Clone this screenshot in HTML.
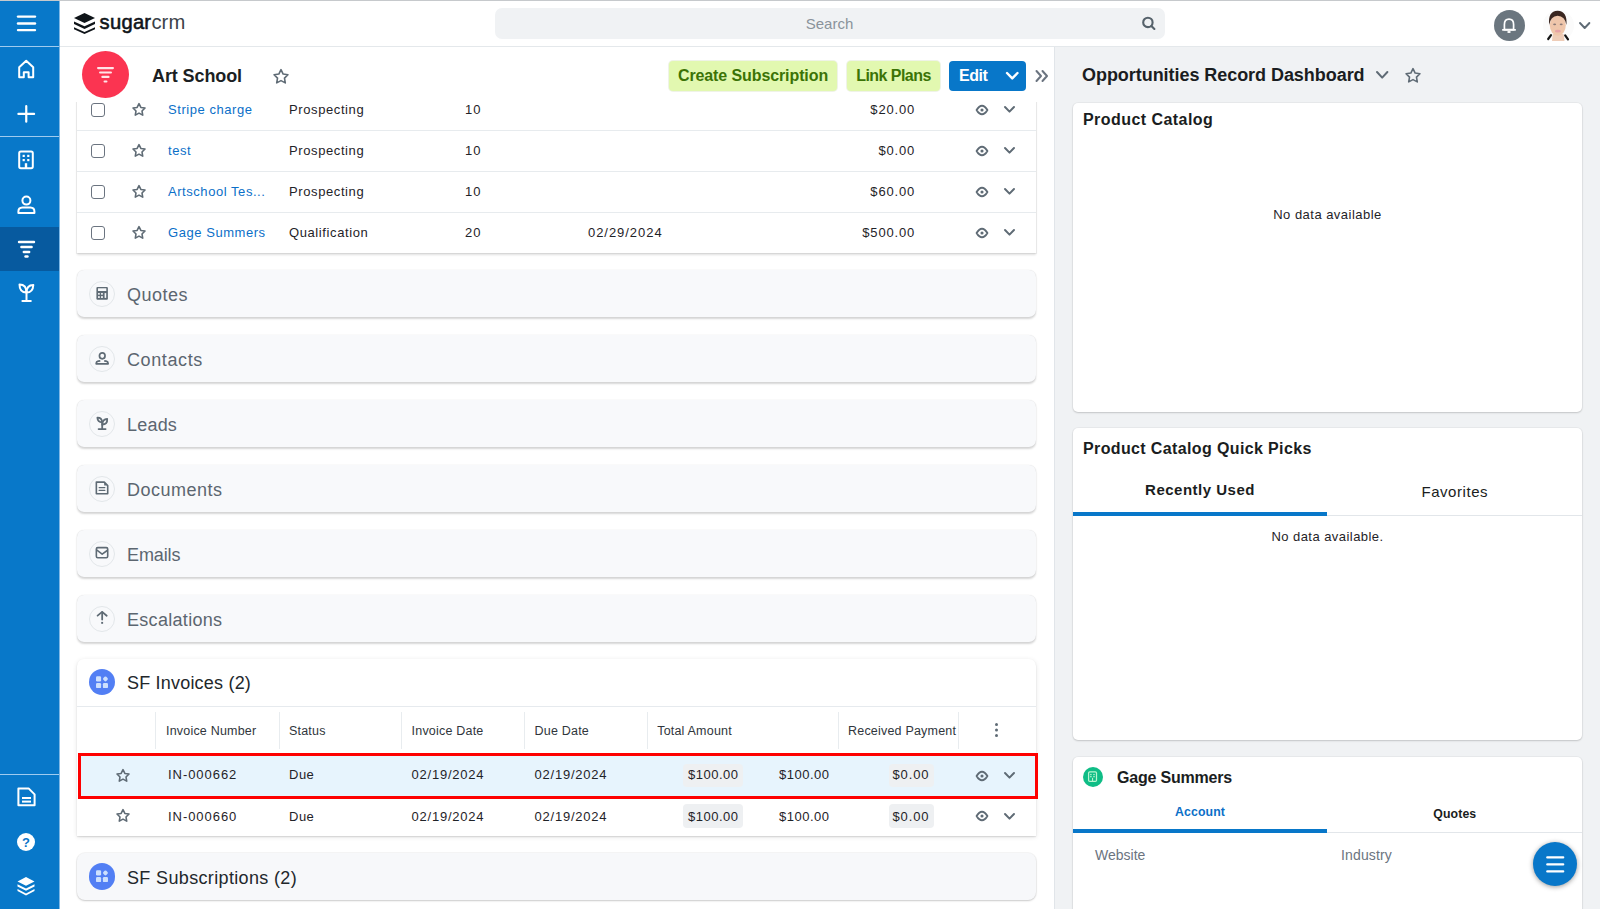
<!DOCTYPE html>
<html><head><meta charset="utf-8"><style>
html,body{margin:0;padding:0;}
body{width:1600px;height:909px;overflow:hidden;position:relative;background:#fff;font-family:"Liberation Sans", sans-serif;}
.t{position:absolute;white-space:nowrap;line-height:1;}
svg{overflow:visible;}
</style></head><body>
<div style="position:absolute;left:1054px;top:47px;width:546px;height:862px;background:#f0f2f4;"></div>
<div style="position:absolute;left:1054px;top:47px;width:1px;height:862px;background:#e1e5e9;"></div>
<div style="position:absolute;left:77px;top:60px;width:959px;height:193px;background:#fff;box-shadow:0 1.5px 2px rgba(0,0,0,0.12), 0 0 0 1px rgba(0,0,0,0.05);"></div>
<div style="position:absolute;left:77px;top:130px;width:959px;height:1px;background:#e7ebee;"></div>
<div style="position:absolute;left:77px;top:171px;width:959px;height:1px;background:#e7ebee;"></div>
<div style="position:absolute;left:77px;top:212px;width:959px;height:1px;background:#e7ebee;"></div>
<div style="position:absolute;left:91px;top:102.5px;width:14px;height:14.0px;box-sizing:border-box;border:1.5px solid #6b7480;border-radius:3px;background:#fff;"></div>
<svg style="position:absolute;left:128.8px;top:100.1px" width="20" height="20" viewBox="0 0 20 20"><polygon points="10.00,3.70 11.85,7.45 15.99,8.05 13.00,10.97 13.70,15.10 10.00,13.15 6.30,15.10 7.00,10.97 4.01,8.05 8.15,7.45" fill="none" stroke="#5f6b75" stroke-width="1.6" stroke-linejoin="round"/></svg>
<div class="t" style="left:168.00px;top:102.60px;font-size:13px;font-weight:400;color:#0b6fc8;letter-spacing:0.55px;">Stripe charge</div>
<div class="t" style="left:289.00px;top:102.60px;font-size:13px;font-weight:400;color:#1f2328;letter-spacing:0.6px;">Prospecting</div>
<div class="t" style="left:465.00px;top:102.60px;font-size:13px;font-weight:400;color:#1f2328;letter-spacing:0.9px;">10</div>
<div class="t" style="right:684.80px;top:102.60px;font-size:13px;font-weight:400;color:#1f2328;letter-spacing:0.85px;">$20.00</div>
<svg style="position:absolute;left:973.5px;top:103.5px" width="16" height="12" viewBox="0 0 16 12"><path d="M2.6 6 C4.4 2.9 6 1.7 8 1.7 C10 1.7 11.6 2.9 13.4 6 C11.6 9.1 10 10.3 8 10.3 C6 10.3 4.4 9.1 2.6 6 Z" fill="none" stroke="#5f6b75" stroke-width="1.9" stroke-linejoin="round"/><circle cx="8" cy="6" r="1.55" fill="#5f6b75"/></svg>
<svg style="position:absolute;left:1002.0px;top:104.2px" width="15" height="10.6" viewBox="0 0 15 10.6"><polyline points="3,3 7.5,7.6 12,3" fill="none" stroke="#5f6b75" stroke-width="2" stroke-linecap="round" stroke-linejoin="round"/></svg>
<div style="position:absolute;left:91px;top:143.5px;width:14px;height:14.0px;box-sizing:border-box;border:1.5px solid #6b7480;border-radius:3px;background:#fff;"></div>
<svg style="position:absolute;left:128.8px;top:141.1px" width="20" height="20" viewBox="0 0 20 20"><polygon points="10.00,3.70 11.85,7.45 15.99,8.05 13.00,10.97 13.70,15.10 10.00,13.15 6.30,15.10 7.00,10.97 4.01,8.05 8.15,7.45" fill="none" stroke="#5f6b75" stroke-width="1.6" stroke-linejoin="round"/></svg>
<div class="t" style="left:168.00px;top:143.60px;font-size:13px;font-weight:400;color:#0b6fc8;letter-spacing:0.55px;">test</div>
<div class="t" style="left:289.00px;top:143.60px;font-size:13px;font-weight:400;color:#1f2328;letter-spacing:0.6px;">Prospecting</div>
<div class="t" style="left:465.00px;top:143.60px;font-size:13px;font-weight:400;color:#1f2328;letter-spacing:0.9px;">10</div>
<div class="t" style="right:684.80px;top:143.60px;font-size:13px;font-weight:400;color:#1f2328;letter-spacing:0.85px;">$0.00</div>
<svg style="position:absolute;left:973.5px;top:144.5px" width="16" height="12" viewBox="0 0 16 12"><path d="M2.6 6 C4.4 2.9 6 1.7 8 1.7 C10 1.7 11.6 2.9 13.4 6 C11.6 9.1 10 10.3 8 10.3 C6 10.3 4.4 9.1 2.6 6 Z" fill="none" stroke="#5f6b75" stroke-width="1.9" stroke-linejoin="round"/><circle cx="8" cy="6" r="1.55" fill="#5f6b75"/></svg>
<svg style="position:absolute;left:1002.0px;top:145.2px" width="15" height="10.6" viewBox="0 0 15 10.6"><polyline points="3,3 7.5,7.6 12,3" fill="none" stroke="#5f6b75" stroke-width="2" stroke-linecap="round" stroke-linejoin="round"/></svg>
<div style="position:absolute;left:91px;top:184.5px;width:14px;height:14.0px;box-sizing:border-box;border:1.5px solid #6b7480;border-radius:3px;background:#fff;"></div>
<svg style="position:absolute;left:128.8px;top:182.1px" width="20" height="20" viewBox="0 0 20 20"><polygon points="10.00,3.70 11.85,7.45 15.99,8.05 13.00,10.97 13.70,15.10 10.00,13.15 6.30,15.10 7.00,10.97 4.01,8.05 8.15,7.45" fill="none" stroke="#5f6b75" stroke-width="1.6" stroke-linejoin="round"/></svg>
<div class="t" style="left:168.00px;top:184.60px;font-size:13px;font-weight:400;color:#0b6fc8;letter-spacing:0.55px;">Artschool Tes...</div>
<div class="t" style="left:289.00px;top:184.60px;font-size:13px;font-weight:400;color:#1f2328;letter-spacing:0.6px;">Prospecting</div>
<div class="t" style="left:465.00px;top:184.60px;font-size:13px;font-weight:400;color:#1f2328;letter-spacing:0.9px;">10</div>
<div class="t" style="right:684.80px;top:184.60px;font-size:13px;font-weight:400;color:#1f2328;letter-spacing:0.85px;">$60.00</div>
<svg style="position:absolute;left:973.5px;top:185.5px" width="16" height="12" viewBox="0 0 16 12"><path d="M2.6 6 C4.4 2.9 6 1.7 8 1.7 C10 1.7 11.6 2.9 13.4 6 C11.6 9.1 10 10.3 8 10.3 C6 10.3 4.4 9.1 2.6 6 Z" fill="none" stroke="#5f6b75" stroke-width="1.9" stroke-linejoin="round"/><circle cx="8" cy="6" r="1.55" fill="#5f6b75"/></svg>
<svg style="position:absolute;left:1002.0px;top:186.2px" width="15" height="10.6" viewBox="0 0 15 10.6"><polyline points="3,3 7.5,7.6 12,3" fill="none" stroke="#5f6b75" stroke-width="2" stroke-linecap="round" stroke-linejoin="round"/></svg>
<div style="position:absolute;left:91px;top:225.5px;width:14px;height:14.0px;box-sizing:border-box;border:1.5px solid #6b7480;border-radius:3px;background:#fff;"></div>
<svg style="position:absolute;left:128.8px;top:223.1px" width="20" height="20" viewBox="0 0 20 20"><polygon points="10.00,3.70 11.85,7.45 15.99,8.05 13.00,10.97 13.70,15.10 10.00,13.15 6.30,15.10 7.00,10.97 4.01,8.05 8.15,7.45" fill="none" stroke="#5f6b75" stroke-width="1.6" stroke-linejoin="round"/></svg>
<div class="t" style="left:168.00px;top:225.60px;font-size:13px;font-weight:400;color:#0b6fc8;letter-spacing:0.55px;">Gage Summers</div>
<div class="t" style="left:289.00px;top:225.60px;font-size:13px;font-weight:400;color:#1f2328;letter-spacing:0.6px;">Qualification</div>
<div class="t" style="left:465.00px;top:225.60px;font-size:13px;font-weight:400;color:#1f2328;letter-spacing:0.9px;">20</div>
<div class="t" style="left:588.00px;top:225.60px;font-size:13px;font-weight:400;color:#1f2328;letter-spacing:0.95px;">02/29/2024</div>
<div class="t" style="right:684.80px;top:225.60px;font-size:13px;font-weight:400;color:#1f2328;letter-spacing:0.85px;">$500.00</div>
<svg style="position:absolute;left:973.5px;top:226.5px" width="16" height="12" viewBox="0 0 16 12"><path d="M2.6 6 C4.4 2.9 6 1.7 8 1.7 C10 1.7 11.6 2.9 13.4 6 C11.6 9.1 10 10.3 8 10.3 C6 10.3 4.4 9.1 2.6 6 Z" fill="none" stroke="#5f6b75" stroke-width="1.9" stroke-linejoin="round"/><circle cx="8" cy="6" r="1.55" fill="#5f6b75"/></svg>
<svg style="position:absolute;left:1002.0px;top:227.2px" width="15" height="10.6" viewBox="0 0 15 10.6"><polyline points="3,3 7.5,7.6 12,3" fill="none" stroke="#5f6b75" stroke-width="2" stroke-linecap="round" stroke-linejoin="round"/></svg>
<div style="position:absolute;left:60px;top:47px;width:994px;height:55px;background:#fff;"></div>
<div style="position:absolute;left:82px;top:51px;width:47px;height:47px;border-radius:50%;background:#fb3451;"></div>
<svg style="position:absolute;left:93px;top:62px" width="24" height="24" viewBox="0 0 24 24"><g stroke="#ffe4e8" stroke-linecap="round" stroke-width="2.2"><line x1="5.1" y1="6.1" x2="19.9" y2="6.1"/><line x1="7.1" y1="10.5" x2="17.9" y2="10.5"/><line x1="9.4" y1="14.9" x2="15.5" y2="14.9"/><line x1="11.6" y1="19.5" x2="13.4" y2="19.5"/></g></svg>
<div class="t" style="left:152.00px;top:66.76px;font-size:18px;font-weight:700;color:#1b1f23;letter-spacing:-0.1px;">Art School</div>
<svg style="position:absolute;left:271px;top:67.1px" width="20" height="20" viewBox="0 0 20 20"><polygon points="10.00,2.70 12.15,7.05 16.94,7.74 13.47,11.13 14.29,15.91 10.00,13.65 5.71,15.91 6.53,11.13 3.06,7.74 7.85,7.05" fill="none" stroke="#5f6b75" stroke-width="1.6" stroke-linejoin="round"/></svg>
<div style="position:absolute;left:669px;top:61px;width:168px;height:30px;background:#e2f8b0;border-radius:4px;box-shadow:0 0 0 1px rgba(120,160,60,0.12);"></div>
<div class="t" style="left:353.00px;width:800px;text-align:center;top:68.46px;font-size:16px;font-weight:700;color:#3b7306;letter-spacing:-0.1px;">Create Subscription</div>
<div style="position:absolute;left:847px;top:61px;width:93px;height:30px;background:#e2f8b0;border-radius:4px;box-shadow:0 0 0 1px rgba(120,160,60,0.12);"></div>
<div class="t" style="left:493.50px;width:800px;text-align:center;top:68.46px;font-size:16px;font-weight:700;color:#3b7306;letter-spacing:-0.55px;">Link Plans</div>
<div style="position:absolute;left:949px;top:61px;width:77px;height:30px;background:#0877c9;border-radius:4px;"></div>
<div class="t" style="left:959.00px;top:68.46px;font-size:16px;font-weight:700;color:#fff;letter-spacing:-0.5px;">Edit</div>
<svg style="position:absolute;left:1003.95px;top:69.89999999999999px" width="16.5" height="11.4" viewBox="0 0 16.5 11.4"><polyline points="3,3 8.25,8.4 13.5,3" fill="none" stroke="#fff" stroke-width="2.4" stroke-linecap="round" stroke-linejoin="round"/></svg>
<svg style="position:absolute;left:1034px;top:68px" width="16" height="16" viewBox="0 0 16 16"><g fill="none" stroke="#6b7480" stroke-width="2" stroke-linecap="round" stroke-linejoin="round"><polyline points="2.5,3 7,8 2.5,13"/><polyline points="8.5,3 13,8 8.5,13"/></g></svg>
<div style="position:absolute;left:77px;top:270px;width:959px;height:47px;background:#f8f9fb;border-radius:7px;box-shadow:0 1.5px 2px rgba(0,0,0,0.16), 0 0 1px rgba(0,0,0,0.12);"></div>
<div style="position:absolute;left:89px;top:281px;width:26px;height:26px;box-sizing:border-box;border-radius:50%;border:1px solid #e3e7ea;"></div>
<svg style="position:absolute;left:94px;top:286px" width="16" height="16" viewBox="0 0 16 16"><rect x="2.4" y="0.9" width="11.5" height="12.9" rx="1.1" fill="#5f6b75"/><g fill="#f7f8fa"><rect x="4" y="2.3" width="8.3" height="2.7"/><rect x="4" y="7.1" width="1.8" height="1.5"/><rect x="7" y="7.1" width="1.9" height="1.5"/><rect x="4" y="10.2" width="1.8" height="1.7"/><rect x="7" y="10.2" width="1.9" height="1.7"/><rect x="10.6" y="7.1" width="1.6" height="4.8"/></g></svg>
<div class="t" style="left:127.00px;top:285.76px;font-size:18px;font-weight:400;color:#5c6670;letter-spacing:0.47px;">Quotes</div>
<div style="position:absolute;left:77px;top:335px;width:959px;height:47px;background:#f8f9fb;border-radius:7px;box-shadow:0 1.5px 2px rgba(0,0,0,0.16), 0 0 1px rgba(0,0,0,0.12);"></div>
<div style="position:absolute;left:89px;top:346px;width:26px;height:26px;box-sizing:border-box;border-radius:50%;border:1px solid #e3e7ea;"></div>
<svg style="position:absolute;left:94px;top:351px" width="16" height="16" viewBox="0 0 16 16"><g fill="none" stroke="#5f6b75" stroke-width="1.7" stroke-linejoin="round"><ellipse cx="8.25" cy="4.78" rx="2.8" ry="3.0"/><path d="M6.3 9.9 L4.2 10.2 Q2.2 10.6 2.2 12.2 V12.85 H14.1 V12.2 Q14.1 10.6 12.1 10.2 L10.2 9.9"/></g></svg>
<div class="t" style="left:127.00px;top:350.76px;font-size:18px;font-weight:400;color:#5c6670;letter-spacing:0.6px;">Contacts</div>
<div style="position:absolute;left:77px;top:400px;width:959px;height:47px;background:#f8f9fb;border-radius:7px;box-shadow:0 1.5px 2px rgba(0,0,0,0.16), 0 0 1px rgba(0,0,0,0.12);"></div>
<div style="position:absolute;left:89px;top:411px;width:26px;height:26px;box-sizing:border-box;border-radius:50%;border:1px solid #e3e7ea;"></div>
<svg style="position:absolute;left:94px;top:416px" width="16" height="16" viewBox="0 0 16 16"><g fill="none" stroke="#5f6b75" stroke-width="1.8" stroke-linecap="round" stroke-linejoin="round"><path d="M8.2 7 V12.6"/><path d="M4.6 13.1 H11.6"/><path d="M8.3 6.3 Q7.6 1.5 3.4 1.7 Q3.6 6 8.3 6.3 Z"/><path d="M8.2 8.6 Q8.6 3.2 13.2 2.9 Q13.6 8.4 8.2 8.6 Z"/></g></svg>
<div class="t" style="left:127.00px;top:415.76px;font-size:18px;font-weight:400;color:#5c6670;letter-spacing:0.2px;">Leads</div>
<div style="position:absolute;left:77px;top:465px;width:959px;height:47px;background:#f8f9fb;border-radius:7px;box-shadow:0 1.5px 2px rgba(0,0,0,0.16), 0 0 1px rgba(0,0,0,0.12);"></div>
<div style="position:absolute;left:89px;top:476px;width:26px;height:26px;box-sizing:border-box;border-radius:50%;border:1px solid #e3e7ea;"></div>
<svg style="position:absolute;left:94px;top:481px" width="16" height="16" viewBox="0 0 16 16"><g fill="none" stroke="#5f6b75" stroke-width="1.6" stroke-linejoin="round"><path d="M2.35 1.1 H10.3 L13.7 4.5 V12.8 H2.35 Z"/></g><path d="M10.2 1.1 L13.7 4.6 H10.2 Z" fill="#5f6b75"/><g stroke="#5f6b75" stroke-width="1.3" stroke-linecap="round"><line x1="5.2" y1="6.6" x2="10.8" y2="6.6"/><line x1="5.2" y1="9.4" x2="10.8" y2="9.4"/></g></svg>
<div class="t" style="left:127.00px;top:480.76px;font-size:18px;font-weight:400;color:#5c6670;letter-spacing:0.5px;">Documents</div>
<div style="position:absolute;left:77px;top:530px;width:959px;height:47px;background:#f8f9fb;border-radius:7px;box-shadow:0 1.5px 2px rgba(0,0,0,0.16), 0 0 1px rgba(0,0,0,0.12);"></div>
<div style="position:absolute;left:89px;top:541px;width:26px;height:26px;box-sizing:border-box;border-radius:50%;border:1px solid #e3e7ea;"></div>
<svg style="position:absolute;left:94px;top:546px" width="16" height="16" viewBox="0 0 16 16"><g fill="none" stroke="#5f6b75" stroke-width="1.6" stroke-linejoin="round" stroke-linecap="round"><rect x="2.35" y="1.6" width="11.35" height="10.1" rx="1.4"/><polyline points="2.9,4.2 8.17,8.1 13.2,4.5"/></g></svg>
<div class="t" style="left:127.00px;top:545.76px;font-size:18px;font-weight:400;color:#5c6670;letter-spacing:-0.1px;">Emails</div>
<div style="position:absolute;left:77px;top:595px;width:959px;height:47px;background:#f8f9fb;border-radius:7px;box-shadow:0 1.5px 2px rgba(0,0,0,0.16), 0 0 1px rgba(0,0,0,0.12);"></div>
<div style="position:absolute;left:89px;top:606px;width:26px;height:26px;box-sizing:border-box;border-radius:50%;border:1px solid #e3e7ea;"></div>
<svg style="position:absolute;left:94px;top:611px" width="16" height="16" viewBox="0 0 16 16"><g fill="none" stroke="#5f6b75" stroke-width="1.8" stroke-linecap="round" stroke-linejoin="round"><line x1="8.17" y1="1.2" x2="8.17" y2="8.6"/><polyline points="3.6,4.6 8.17,0.9 12.7,4.7"/></g><rect x="7.2" y="10.9" width="1.9" height="1.9" fill="#5f6b75"/></svg>
<div class="t" style="left:127.00px;top:610.76px;font-size:18px;font-weight:400;color:#5c6670;letter-spacing:0.3px;">Escalations</div>
<div style="position:absolute;left:77px;top:659px;width:959px;height:177px;background:#fff;border-radius:7px 7px 0 0;box-shadow:0 1px 1.5px rgba(0,0,0,0.12), 0 1px 5px rgba(0,0,0,0.10);"></div>
<div style="position:absolute;left:88.8px;top:668.9px;width:26.4px;height:26.4px;border-radius:50%;background:#527ff4;"></div>
<svg style="position:absolute;left:94px;top:674px" width="16" height="16" viewBox="0 0 16 16"><g fill="#cde0fd"><rect x="2" y="2.2" width="5.1" height="5.2" rx="1.2"/><rect x="2" y="9.1" width="5.1" height="5" rx="1.2"/><rect x="8.9" y="9.1" width="5.1" height="5" rx="1.2"/><rect x="9.35" y="2.8" width="4.2" height="4.2" rx="1.3" transform="rotate(45 11.45 4.9)"/></g></svg>
<div class="t" style="left:127.00px;top:674.06px;font-size:18px;font-weight:400;color:#22272b;letter-spacing:0.2px;">SF Invoices (2)</div>
<div style="position:absolute;left:77px;top:706px;width:959px;height:1px;background:#e6eaee;"></div>
<div style="position:absolute;left:155px;top:712px;width:1px;height:37px;background:#e8ecef;"></div>
<div style="position:absolute;left:279px;top:712px;width:1px;height:37px;background:#e8ecef;"></div>
<div style="position:absolute;left:401px;top:712px;width:1px;height:37px;background:#e8ecef;"></div>
<div style="position:absolute;left:524px;top:712px;width:1px;height:37px;background:#e8ecef;"></div>
<div style="position:absolute;left:647px;top:712px;width:1px;height:37px;background:#e8ecef;"></div>
<div style="position:absolute;left:838px;top:712px;width:1px;height:37px;background:#e8ecef;"></div>
<div style="position:absolute;left:958px;top:712px;width:1px;height:37px;background:#e8ecef;"></div>
<div class="t" style="left:166.00px;top:724.62px;font-size:12.5px;font-weight:400;color:#30363c;letter-spacing:0.2px;">Invoice Number</div>
<div class="t" style="left:289.00px;top:724.62px;font-size:12.5px;font-weight:400;color:#30363c;letter-spacing:0.2px;">Status</div>
<div class="t" style="left:411.60px;top:724.62px;font-size:12.5px;font-weight:400;color:#30363c;letter-spacing:0.2px;">Invoice Date</div>
<div class="t" style="left:534.60px;top:724.62px;font-size:12.5px;font-weight:400;color:#30363c;letter-spacing:0.2px;">Due Date</div>
<div class="t" style="left:657.20px;top:724.62px;font-size:12.5px;font-weight:400;color:#30363c;letter-spacing:0.2px;">Total Amount</div>
<div class="t" style="left:848.00px;top:724.62px;font-size:12.5px;font-weight:400;color:#30363c;letter-spacing:0.2px;">Received Payment</div>
<svg style="position:absolute;left:993px;top:722px" width="8" height="16" viewBox="0 0 8 16"><g fill="#5f6b75"><circle cx="3.5" cy="2.5" r="1.5"/><circle cx="3.5" cy="8" r="1.5"/><circle cx="3.5" cy="13.5" r="1.5"/></g></svg>
<div style="position:absolute;left:77.5px;top:753.3px;width:960px;height:45.5px;box-sizing:border-box;border:3.2px solid #fe0000;background:#e7f4fd;"></div>
<svg style="position:absolute;left:112.8px;top:765.8px" width="20" height="20" viewBox="0 0 20 20"><polygon points="10.00,3.70 11.85,7.45 15.99,8.05 13.00,10.97 13.70,15.10 10.00,13.15 6.30,15.10 7.00,10.97 4.01,8.05 8.15,7.45" fill="none" stroke="#5f6b75" stroke-width="1.6" stroke-linejoin="round"/></svg>
<div class="t" style="left:168.00px;top:768.00px;font-size:13px;font-weight:400;color:#1f2328;letter-spacing:0.95px;">IN-000662</div>
<div class="t" style="left:289.00px;top:768.00px;font-size:13px;font-weight:400;color:#1f2328;letter-spacing:0.5px;">Due</div>
<div class="t" style="left:411.60px;top:768.00px;font-size:13px;font-weight:400;color:#1f2328;letter-spacing:0.75px;">02/19/2024</div>
<div class="t" style="left:534.60px;top:768.00px;font-size:13px;font-weight:400;color:#1f2328;letter-spacing:0.75px;">02/19/2024</div>
<div style="position:absolute;left:683px;top:763.5px;width:60px;height:23.5px;background:#eef0f2;border-radius:4px;"></div>
<div class="t" style="right:861.50px;top:768.00px;font-size:13px;font-weight:400;color:#1f2328;letter-spacing:0.5px;">$100.00</div>
<div class="t" style="right:770.50px;top:768.00px;font-size:13px;font-weight:400;color:#1f2328;letter-spacing:0.5px;">$100.00</div>
<div style="position:absolute;left:889px;top:763.5px;width:45px;height:23.5px;background:#eef0f2;border-radius:4px;"></div>
<div class="t" style="right:670.50px;top:768.00px;font-size:13px;font-weight:400;color:#1f2328;letter-spacing:0.9px;">$0.00</div>
<svg style="position:absolute;left:973.8px;top:769.5px" width="16" height="12" viewBox="0 0 16 12"><path d="M2.6 6 C4.4 2.9 6 1.7 8 1.7 C10 1.7 11.6 2.9 13.4 6 C11.6 9.1 10 10.3 8 10.3 C6 10.3 4.4 9.1 2.6 6 Z" fill="none" stroke="#5f6b75" stroke-width="1.9" stroke-linejoin="round"/><circle cx="8" cy="6" r="1.55" fill="#5f6b75"/></svg>
<svg style="position:absolute;left:1001.9px;top:770.2px" width="15" height="10.6" viewBox="0 0 15 10.6"><polyline points="3,3 7.5,7.6 12,3" fill="none" stroke="#5f6b75" stroke-width="2" stroke-linecap="round" stroke-linejoin="round"/></svg>
<svg style="position:absolute;left:112.8px;top:806.3px" width="20" height="20" viewBox="0 0 20 20"><polygon points="10.00,3.70 11.85,7.45 15.99,8.05 13.00,10.97 13.70,15.10 10.00,13.15 6.30,15.10 7.00,10.97 4.01,8.05 8.15,7.45" fill="none" stroke="#5f6b75" stroke-width="1.6" stroke-linejoin="round"/></svg>
<div class="t" style="left:168.00px;top:809.50px;font-size:13px;font-weight:400;color:#1f2328;letter-spacing:0.95px;">IN-000660</div>
<div class="t" style="left:289.00px;top:809.50px;font-size:13px;font-weight:400;color:#1f2328;letter-spacing:0.5px;">Due</div>
<div class="t" style="left:411.60px;top:809.50px;font-size:13px;font-weight:400;color:#1f2328;letter-spacing:0.75px;">02/19/2024</div>
<div class="t" style="left:534.60px;top:809.50px;font-size:13px;font-weight:400;color:#1f2328;letter-spacing:0.75px;">02/19/2024</div>
<div style="position:absolute;left:683px;top:804px;width:60px;height:23.5px;background:#eef0f2;border-radius:4px;"></div>
<div class="t" style="right:861.50px;top:809.50px;font-size:13px;font-weight:400;color:#1f2328;letter-spacing:0.5px;">$100.00</div>
<div class="t" style="right:770.50px;top:809.50px;font-size:13px;font-weight:400;color:#1f2328;letter-spacing:0.5px;">$100.00</div>
<div style="position:absolute;left:889px;top:804px;width:45px;height:23.5px;background:#eef0f2;border-radius:4px;"></div>
<div class="t" style="right:670.50px;top:809.50px;font-size:13px;font-weight:400;color:#1f2328;letter-spacing:0.9px;">$0.00</div>
<svg style="position:absolute;left:973.8px;top:810px" width="16" height="12" viewBox="0 0 16 12"><path d="M2.6 6 C4.4 2.9 6 1.7 8 1.7 C10 1.7 11.6 2.9 13.4 6 C11.6 9.1 10 10.3 8 10.3 C6 10.3 4.4 9.1 2.6 6 Z" fill="none" stroke="#5f6b75" stroke-width="1.9" stroke-linejoin="round"/><circle cx="8" cy="6" r="1.55" fill="#5f6b75"/></svg>
<svg style="position:absolute;left:1001.9px;top:810.7px" width="15" height="10.6" viewBox="0 0 15 10.6"><polyline points="3,3 7.5,7.6 12,3" fill="none" stroke="#5f6b75" stroke-width="2" stroke-linecap="round" stroke-linejoin="round"/></svg>
<div style="position:absolute;left:77px;top:853px;width:959px;height:47px;background:#f7f8fa;border-radius:8px;box-shadow:0 1px 2px rgba(0,0,0,0.18), 0 0 0 1px rgba(0,0,0,0.035);"></div>
<div style="position:absolute;left:88.8px;top:863.1999999999999px;width:26.4px;height:26.4px;border-radius:50%;background:#527ff4;"></div>
<svg style="position:absolute;left:94px;top:868.3px" width="16" height="16" viewBox="0 0 16 16"><g fill="#cde0fd"><rect x="2" y="2.2" width="5.1" height="5.2" rx="1.2"/><rect x="2" y="9.1" width="5.1" height="5" rx="1.2"/><rect x="8.9" y="9.1" width="5.1" height="5" rx="1.2"/><rect x="9.35" y="2.8" width="4.2" height="4.2" rx="1.3" transform="rotate(45 11.45 4.9)"/></g></svg>
<div class="t" style="left:127.00px;top:869.16px;font-size:18px;font-weight:400;color:#22272b;letter-spacing:0.35px;">SF Subscriptions (2)</div>
<div style="position:absolute;left:60px;top:0px;width:1540px;height:47px;background:#fff;"></div>
<div style="position:absolute;left:60px;top:46px;width:1540px;height:1px;background:#e4e8eb;"></div>
<div style="position:absolute;left:0px;top:0px;width:1600px;height:1px;background:#c6c9cc;"></div>
<svg style="position:absolute;left:73px;top:12px" width="24" height="23" viewBox="0 0 24 23"><g fill="#0f1419"><path d="M11.5 0.9 L22 5.9 L11.5 10.9 L1 5.9 Z"/><path d="M1 9.4 L11.5 14.2 L22 9.4 V11.9 L11.5 16.9 L1 11.9 Z"/><path d="M1 15.3 L11.5 20.1 L22 15.3 V17.3 L11.5 21.9 L1 17.3 Z"/></g></svg>
<div class="t" style="left:99.60px;top:11.70px;font-size:20.2px;font-weight:400;color:#0f1419;letter-spacing:0.25px;-webkit-text-stroke:0.55px #0f1419;">sugar</div>
<div class="t" style="left:151.40px;top:11.70px;font-size:20.2px;font-weight:400;color:#3b4249;letter-spacing:0.1px;">crm</div>
<div style="position:absolute;left:495px;top:8px;width:670px;height:31px;background:#f0f2f4;border-radius:7px;"></div>
<div class="t" style="left:429.50px;width:800px;text-align:center;top:16.30px;font-size:15px;font-weight:400;color:#8a939b;letter-spacing:0px;">Search</div>
<svg style="position:absolute;left:1141px;top:16px" width="16" height="16" viewBox="0 0 16 16"><g fill="none" stroke="#56626b" stroke-width="2.1"><circle cx="6.9" cy="6.4" r="4.7"/><line x1="10.4" y1="9.9" x2="13.4" y2="13" stroke-linecap="round"/></g></svg>
<div style="position:absolute;left:1493.5px;top:10px;width:31px;height:31px;border-radius:50%;background:#6b767f;"></div>
<svg style="position:absolute;left:1500px;top:17px" width="18" height="18" viewBox="0 0 18 18"><g fill="none" stroke="#fff" stroke-width="1.7" stroke-linejoin="round"><path d="M4.4 12.6 V7.4 q0-5.2 4.6-5.2 q4.6 0 4.6 5.2 V12.6 Z"/><line x1="2.8" y1="12.8" x2="15.2" y2="12.8" stroke-linecap="round"/></g><ellipse cx="9" cy="14.9" rx="1.8" ry="1" fill="#fff"/></svg>
<svg style="position:absolute;left:1543px;top:10px" width="31" height="31" viewBox="0 0 31 31"><circle cx="15.5" cy="15.5" r="15.5" fill="#fbfbfb"/><path d="M9.8 24 L20.6 24 L21.5 31 L9 31 Z" fill="#efcdb8"/><ellipse cx="14.8" cy="15.2" rx="8" ry="10.6" fill="#efc6ab"/><path d="M6.2 15 Q4.6 1.2 14.6 0.8 Q24.6 1.2 23.4 15 Q22 6.2 14.6 5.8 Q7.6 6.2 6.2 15 Z" fill="#3a2620"/><ellipse cx="11.6" cy="14.4" rx="1.5" ry="0.8" fill="#8d7b78"/><ellipse cx="18.2" cy="14.4" rx="1.5" ry="0.8" fill="#8d7b78"/><ellipse cx="14.9" cy="21.2" rx="3" ry="1.4" fill="#e7a2a6"/><g stroke="#151515" stroke-width="2.2" stroke-linecap="round"><line x1="5.2" y1="29" x2="8" y2="25.2"/><line x1="25" y1="29.4" x2="22.2" y2="25.4"/></g></svg>
<svg style="position:absolute;left:1576.8px;top:19.9px" width="15.4" height="11" viewBox="0 0 15.4 11"><polyline points="3,3 7.7,8 12.4,3" fill="none" stroke="#5f6b75" stroke-width="1.9" stroke-linecap="round" stroke-linejoin="round"/></svg>
<div style="position:absolute;left:0px;top:1px;width:60px;height:908px;background:#0878c9;"></div>
<div style="position:absolute;left:59px;top:1px;width:1px;height:908px;background:#7fb8e6;"></div>
<div style="position:absolute;left:0px;top:46px;width:59px;height:1px;background:#9fcbef;"></div>
<div style="position:absolute;left:0px;top:136px;width:59px;height:1px;background:#9fcbef;"></div>
<div style="position:absolute;left:0px;top:774px;width:59px;height:1px;background:#9fcbef;"></div>
<div style="position:absolute;left:0px;top:227px;width:59px;height:44px;background:#075a9f;"></div>
<svg style="position:absolute;left:16px;top:14px" width="20" height="20" viewBox="0 0 20 20"><g stroke="#fff" stroke-width="2.4" stroke-linecap="round"><line x1="2" y1="2.6" x2="19" y2="2.6"/><line x1="2" y1="9.5" x2="19" y2="9.5"/><line x1="2" y1="16.1" x2="19" y2="16.1"/></g></svg>
<svg style="position:absolute;left:16px;top:58px" width="22" height="22" viewBox="0 0 22 22"><path d="M3.2 19.2 V9.2 L10.2 2.8 L17.2 9.2 V19.2 H12.6 V14.2 H7.8 V19.2 Z" fill="none" stroke="#fff" stroke-width="2" stroke-linejoin="round"/></svg>
<svg style="position:absolute;left:15px;top:103px" width="22" height="22" viewBox="0 0 22 22"><g stroke="#fff" stroke-width="2.2" stroke-linecap="round"><line x1="11.25" y1="3.1" x2="11.25" y2="18.7"/><line x1="3.4" y1="10.9" x2="19.1" y2="10.9"/></g></svg>
<svg style="position:absolute;left:16px;top:149px" width="22" height="22" viewBox="0 0 22 22"><rect x="3.2" y="2.6" width="13.6" height="16.6" rx="1.6" fill="none" stroke="#fff" stroke-width="2"/><g fill="#fff"><rect x="6.6" y="5.8" width="2.2" height="2.2"/><rect x="11.2" y="5.8" width="2.2" height="2.2"/><rect x="6.6" y="10" width="2.2" height="2.2"/><rect x="11.2" y="10" width="2.2" height="2.2"/><rect x="8.8" y="14.2" width="2.4" height="5"/></g></svg>
<svg style="position:absolute;left:16px;top:194px" width="22" height="22" viewBox="0 0 22 22"><g fill="none" stroke="#fff" stroke-width="2" stroke-linejoin="round"><circle cx="10.4" cy="6.6" r="4"/><path d="M2.4 19 v-1.6 q0-3.6 4-3.8 h8 q4 0.2 4 3.8 V19 Z"/></g></svg>
<svg style="position:absolute;left:16px;top:238px" width="22" height="22" viewBox="0 0 22 22"><g stroke="#fff" stroke-width="2.4" stroke-linecap="round"><line x1="3" y1="4" x2="18" y2="4"/><line x1="5.4" y1="9" x2="15.6" y2="9"/><line x1="7.8" y1="14" x2="13.2" y2="14"/><line x1="9.5" y1="18.5" x2="11.5" y2="18.5"/></g></svg>
<svg style="position:absolute;left:16px;top:282px" width="22" height="22" viewBox="0 0 22 22"><g fill="none" stroke="#fff" stroke-width="2" stroke-linecap="round" stroke-linejoin="round"><path d="M10.5 10.5 v8"/><path d="M6.4 19 h8.4"/><path d="M10.5 10.5 q-7 0 -7 -8 q7 0 7 8 z"/><path d="M10.5 10.5 q6.5 0 6.8 -7.5 q-6.8 0.2 -6.8 7.5"/></g></svg>
<svg style="position:absolute;left:16px;top:786px" width="22" height="22" viewBox="0 0 22 22"><g fill="none" stroke="#fff" stroke-width="2" stroke-linejoin="round"><path d="M2.4 2.4 H12.6 L18.6 8.4 V19.2 H2.4 Z"/></g><g fill="#fff"><rect x="6" y="11" width="9" height="2"/><rect x="6" y="14.6" width="9" height="2"/></g></svg>
<svg style="position:absolute;left:15px;top:831px" width="22" height="22" viewBox="0 0 22 22"><circle cx="11" cy="11" r="9" fill="#fff"/><text x="11" y="15.6" text-anchor="middle" font-family="Liberation Sans" font-weight="700" font-size="13" fill="#0a74c9">?</text></svg>
<svg style="position:absolute;left:16px;top:875px" width="22" height="22" viewBox="0 0 22 22"><g fill="#fff"><path d="M10 2 L18.5 6.4 L10 10.8 L1.5 6.4 Z"/><path d="M1.5 9.2 L10 13.6 L18.5 9.2 V11.4 L10 15.8 L1.5 11.4 Z"/><path d="M1.5 14 L10 18.4 L18.5 14 V16 L10 20.6 L1.5 16 Z"/></g></svg>
<div class="t" style="left:1082.00px;top:66.26px;font-size:18px;font-weight:700;color:#1a1d21;letter-spacing:-0.05px;">Opportunities Record Dashboard</div>
<svg style="position:absolute;left:1374.0px;top:69.10000000000001px" width="16.4" height="11.6" viewBox="0 0 16.4 11.6"><polyline points="3,3 8.2,8.6 13.4,3" fill="none" stroke="#5f6b75" stroke-width="2" stroke-linecap="round" stroke-linejoin="round"/></svg>
<svg style="position:absolute;left:1403.4px;top:65.6px" width="20" height="20" viewBox="0 0 20 20"><polygon points="10.00,2.70 12.15,7.05 16.94,7.74 13.47,11.13 14.29,15.91 10.00,13.65 5.71,15.91 6.53,11.13 3.06,7.74 7.85,7.05" fill="none" stroke="#5f6b75" stroke-width="1.6" stroke-linejoin="round"/></svg>
<div style="position:absolute;left:1073px;top:103px;width:509px;height:309px;background:#fff;border-radius:5px;box-shadow:0 1px 2px rgba(0,0,0,0.16), 0 0 0 1px rgba(0,0,0,0.03);"></div>
<div class="t" style="left:1083.00px;top:112.46px;font-size:16px;font-weight:700;color:#1a1d21;letter-spacing:0.45px;">Product Catalog</div>
<div class="t" style="left:927.50px;width:800px;text-align:center;top:208.00px;font-size:13px;font-weight:400;color:#1f2328;letter-spacing:0.47px;">No data available</div>
<div style="position:absolute;left:1073px;top:428px;width:509px;height:312px;background:#fff;border-radius:5px;box-shadow:0 1px 2px rgba(0,0,0,0.16), 0 0 0 1px rgba(0,0,0,0.03);"></div>
<div class="t" style="left:1083.00px;top:441.46px;font-size:16px;font-weight:700;color:#1a1d21;letter-spacing:0.37px;">Product Catalog Quick Picks</div>
<div class="t" style="left:800.00px;width:800px;text-align:center;top:481.80px;font-size:15px;font-weight:700;color:#1a1d21;letter-spacing:0.5px;">Recently Used</div>
<div class="t" style="left:1054.80px;width:800px;text-align:center;top:483.80px;font-size:15px;font-weight:400;color:#1a1d21;letter-spacing:0.55px;">Favorites</div>
<div style="position:absolute;left:1073px;top:515px;width:509px;height:1px;background:#e2e6ea;"></div>
<div style="position:absolute;left:1073px;top:512px;width:254px;height:4px;background:#0877c9;"></div>
<div class="t" style="left:927.50px;width:800px;text-align:center;top:530.40px;font-size:13px;font-weight:400;color:#1f2328;letter-spacing:0.45px;">No data available.</div>
<div style="position:absolute;left:1073px;top:757px;width:509px;height:173px;background:#fff;border-radius:5px;box-shadow:0 1px 2px rgba(0,0,0,0.16), 0 0 0 1px rgba(0,0,0,0.03);"></div>
<div style="position:absolute;left:1082.9px;top:766.8px;width:20px;height:20px;border-radius:50%;background:#0fbd86;"></div>
<svg style="position:absolute;left:1087px;top:771px" width="12" height="12" viewBox="0 0 12 12"><rect x="1.6" y="0.75" width="7.9" height="9.6" rx="1.2" fill="none" stroke="#b8f5cf" stroke-width="1.25"/><g fill="#b8f5cf"><rect x="3.2" y="2.9" width="1.4" height="1.3"/><rect x="6.3" y="2.9" width="1.4" height="1.3"/><rect x="3.2" y="5.0" width="1.4" height="1.3"/><rect x="6.3" y="5.0" width="1.4" height="1.3"/><rect x="5" y="6.8" width="1.1" height="3.4"/></g></svg>
<div class="t" style="left:1117.00px;top:770.46px;font-size:16px;font-weight:700;color:#1a1d21;letter-spacing:-0.2px;">Gage Summers</div>
<div class="t" style="left:800.00px;width:800px;text-align:center;top:805.59px;font-size:12.3px;font-weight:700;color:#0b6fc8;letter-spacing:0.1px;">Account</div>
<div class="t" style="left:1054.80px;width:800px;text-align:center;top:807.59px;font-size:12.3px;font-weight:700;color:#1a1d21;letter-spacing:0.1px;">Quotes</div>
<div style="position:absolute;left:1073px;top:832px;width:509px;height:1px;background:#e2e6ea;"></div>
<div style="position:absolute;left:1073px;top:829px;width:254px;height:4px;background:#0877c9;"></div>
<div class="t" style="left:1095.00px;top:848.15px;font-size:14px;font-weight:400;color:#6b7480;letter-spacing:0px;">Website</div>
<div class="t" style="left:1341.00px;top:848.15px;font-size:14px;font-weight:400;color:#6b7480;letter-spacing:0.15px;">Industry</div>
<div style="position:absolute;left:1533.4px;top:842.3px;width:44px;height:44px;border-radius:50%;background:#0877c9;box-shadow:0 1px 5px rgba(0,0,0,0.4);"></div>
<svg style="position:absolute;left:1545px;top:855px" width="21" height="19" viewBox="0 0 21 19"><g stroke="#fff" stroke-width="2.3" stroke-linecap="round"><line x1="2.3" y1="2.4" x2="18.2" y2="2.4"/><line x1="2.3" y1="9.4" x2="18.2" y2="9.4"/><line x1="2.3" y1="16.4" x2="18.2" y2="16.4"/></g></svg>
</body></html>
